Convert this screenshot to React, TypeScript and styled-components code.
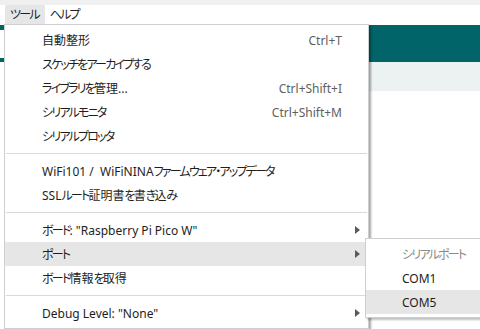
import React from 'react';
import styled, { createGlobalStyle } from 'styled-components';

const GlobalStyle = createGlobalStyle`
  html, body {
    margin: 0;
    padding: 0;
    background: #ffffff;
  }
  body {
    font-family: "Noto Sans", "Noto Sans CJK JP", sans-serif;
    font-feature-settings: "palt";
    overflow: hidden;
  }
`;

const Page = styled.div`
  position: relative;
  width: 480px;
  height: 329px;
  overflow: hidden;
  display: flex;
  flex-direction: column;
  background: #ffffff;
`;

const TitleStrip = styled.div`
  height: 5px;
  background: #f0f0f0;
`;

const MenuBar = styled.div`
  height: 20px;
  display: flex;
  padding-left: 5px;
  background: #ffffff;
`;

const MenuBarItem = styled.div<{ $open?: boolean }>`
  height: 19px;
  line-height: 19px;
  padding: 0 6px 0 5px;
  font-size: 12px;
  color: #1e1e1e;
  border-radius: 2px 2px 0 0;
  background: ${(p) => (p.$open ? '#e6e6e6' : 'transparent')};
`;

const Toolbar = styled.div`
  height: 37px;
  background: #006468;
  display: flex;
  align-items: center;
`;

const ToolButton = styled.div`
  width: 24px;
  height: 28px;
  background: #ffffff;
`;

const TabBar = styled.div`
  height: 29px;
  background: #ecf1f1;
  display: flex;
`;

const Tab = styled.div`
  width: 60px;
  background: #ffffff;
`;

const Editor = styled.div`
  flex: 1;
  background: #ffffff;
`;

const Menu = styled.div`
  position: absolute;
  left: 4px;
  top: 24px;
  width: 363px;
  padding: 3px 0;
  background: #ffffff;
  border: 1px solid #cfcfcf;
  box-shadow: 2px 2px 2px rgba(0, 0, 0, 0.35);
  display: flex;
  flex-direction: column;
`;

const Item = styled.div<{ $active?: boolean }>`
  height: 24px;
  display: flex;
  align-items: center;
  padding-left: 37px;
  font-size: 12px;
  color: #1e1e1e;
  white-space: pre;
  background: ${(p) => (p.$active ? '#e6e6e6' : 'transparent')};
`;

const Label = styled.span`
  flex: 1;
`;

/* kana in the Windows UI font are much narrower than full width */
const Kana = styled.span`
  letter-spacing: -1.8px;
`;

const Shortcut = styled.span`
  color: #5e5e5e;
`;

const ArrowCell = styled.span`
  width: 26px;
  display: flex;
  justify-content: flex-start;
  padding-left: 13px;
  box-sizing: border-box;
`;

const Arrow = styled.span`
  width: 0;
  height: 0;
  border-left: 5px solid #5a5a5a;
  border-top: 4.5px solid transparent;
  border-bottom: 4.5px solid transparent;
`;

const Separator = styled.div`
  height: 1px;
  margin: 5px 1px;
  background: #d9d9d9;
`;

const SubMenu = styled.div`
  position: absolute;
  left: 365px;
  top: 238px;
  width: 150px;
  padding: 3px 0;
  background: #ffffff;
  border: 1px solid #cfcfcf;
  box-shadow: 2px 2px 2px rgba(0, 0, 0, 0.25);
`;

const SubItem = styled.div<{ $active?: boolean; $muted?: boolean }>`
  height: 24px;
  display: flex;
  align-items: center;
  padding-left: 36px;
  font-size: 12px;
  color: ${(p) => (p.$muted ? '#8a8a8a' : '#1e1e1e')};
  background: ${(p) => (p.$active ? '#e6e6e6' : 'transparent')};
`;

const Text = ({ children }: { children: string }) => (
  <>
    {children.split(/([\u3040-\u30ff]+)/).map((part, i) =>
      /[\u3040-\u30ff]/.test(part) ? <Kana key={i}>{part}</Kana> : part
    )}
  </>
);

type Entry =
  | { kind: 'sep' }
  | { kind: 'item'; label: string; shortcut?: string; sub?: boolean; active?: boolean };

const entries: Entry[] = [
  { kind: 'item', label: '自動整形', shortcut: 'Ctrl+T' },
  { kind: 'item', label: 'スケッチをアーカイブする' },
  { kind: 'item', label: 'ライブラリを管理...', shortcut: 'Ctrl+Shift+I' },
  { kind: 'item', label: 'シリアルモニタ', shortcut: 'Ctrl+Shift+M' },
  { kind: 'item', label: 'シリアルプロッタ' },
  { kind: 'sep' },
  { kind: 'item', label: 'WiFi101 /  WiFiNINAファームウェア・アップデータ' },
  { kind: 'item', label: 'SSLルート証明書を書き込み' },
  { kind: 'sep' },
  { kind: 'item', label: 'ボード: "Raspberry Pi Pico W"', sub: true },
  { kind: 'item', label: 'ポート', sub: true, active: true },
  { kind: 'item', label: 'ボード情報を取得' },
  { kind: 'sep' },
  { kind: 'item', label: 'Debug Level: "None"', sub: true },
];

const App = () => {
  return (
    <Page>
      <GlobalStyle />
      <TitleStrip />
      <MenuBar>
        <MenuBarItem $open>
          <Text>ツール</Text>
        </MenuBarItem>
        <MenuBarItem>
          <Text>ヘルプ</Text>
        </MenuBarItem>
      </MenuBar>
      <Toolbar>
        <ToolButton />
      </Toolbar>
      <TabBar>
        <Tab />
      </TabBar>
      <Editor />

      <Menu>
        {entries.map((e, i) =>
          e.kind === 'sep' ? (
            <Separator key={i} />
          ) : (
            <Item key={i} $active={e.active}>
              <Label>
                <Text>{e.label}</Text>
              </Label>
              {e.shortcut && <Shortcut>{e.shortcut}</Shortcut>}
              <ArrowCell>{e.sub && <Arrow />}</ArrowCell>
            </Item>
          )
        )}
      </Menu>

      <SubMenu>
        <SubItem $muted>
          <Text>シリアルポート</Text>
        </SubItem>
        <SubItem>COM1</SubItem>
        <SubItem $active>COM5</SubItem>
      </SubMenu>
    </Page>
  );
};

export default App;
